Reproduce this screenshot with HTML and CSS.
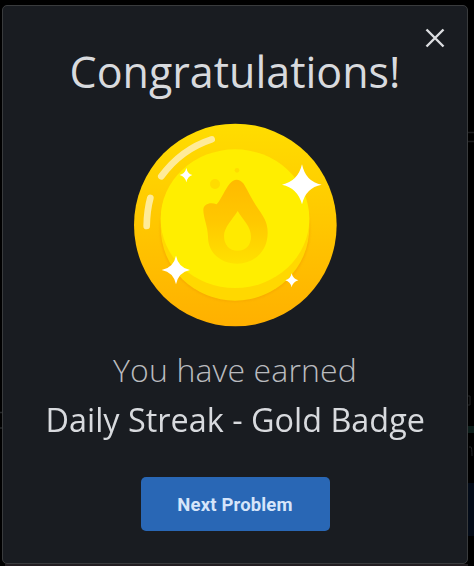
FILE: index.html
```
<!DOCTYPE html>
<html lang="en">
<head>
<title>Congratulations!</title>

<meta charset="utf-8">
<meta name="viewport" content="width=device-width, initial-scale=1">

<link rel="stylesheet" href="styles.css">
</head>

<body>
  <!-- dimmed page edges behind the modal -->
  <svg class="backdrop" viewBox="0 0 474 566" aria-hidden="true">
    <path d="M467 132.500h7M467 141.500h7" stroke="#1c1d1f" stroke-width="1.500"/>
    <path d="M0 412.500h3M0 428h3" stroke="#26282a" stroke-width="1.500"/>
    <path d="M468 396h2v9h-2M469 447h2q1 1 1 9" stroke="#232527" fill="none"/>
    <path d="M468 426h6v7h-6z" fill="#0b1d19"/>
    <path d="M468 483h6v53h-6z" fill="#030b18"/>
    <path d="M5 565h463" stroke="#231e22" stroke-width="2"/>
  </svg>

  <div class="modal" role="dialog" aria-modal="true">
    <button class="close" aria-label="Close">
      <svg viewBox="0 0 20 20"><path d="M1.500 1.500l17 17M18.500 1.500l-17 17"/></svg>
    </button>

    <h1 class="title">Congratulations!</h1>

    <svg class="badge" viewBox="0 0 666 666" role="img" aria-label="Gold badge">
      <defs>
        <linearGradient id="rim" x1="0" y1="0" x2="0" y2="1">
          <stop offset="0" stop-color="#ffdd00"/>
          <stop offset="1" stop-color="#ffb000"/>
        </linearGradient>
        <linearGradient id="flame" x1="0" y1="0" x2="0" y2="1">
          <stop offset="0" stop-color="#ffba00"/>
          <stop offset=".5" stop-color="#ffc800"/>
          <stop offset="1" stop-color="#ffe100"/>
        </linearGradient>
        <filter id="soft"><feGaussianBlur stdDeviation="3"/></filter>
      </defs>
      <circle cx="334" cy="333" r="304" fill="url(#rim)"/>
      <ellipse cx="333" cy="346" rx="225" ry="218" fill="#f5a400" opacity=".6" filter="url(#soft)"/>
      <path d="M110 315a223 208 0 0 1 446 0v25a223 220 0 0 1-446 0z" fill="#ffd800"/>
      <ellipse cx="333" cy="314" rx="223" ry="208" fill="#ffee00"/>

      <path d="M317 209Q338 185 359 209C372 231 385 258 399 279C417 306 431 323 431 356C431 414 388 449 340 449C291 449 252 417 252 368C252 340 238 310 238 288C238 270 259 263 278 271C294 252 303 226 317 209Z" fill="url(#flame)"/>
      <path d="M341 291C355 316 381 336 381 368C381 394 365 410 341 410C316 410 300 393 300 366C300 340 325 317 341 291Z" fill="#ffea00"/>
      <circle cx="273" cy="210" r="15" fill="#ffdc00"/>
      <circle cx="339" cy="169" r="7" fill="#ffdc00"/>

      <path d="M112 187Q171 106 263 76M79 252Q69 288 68 336" fill="none" stroke="#ffeb99" stroke-width="20" stroke-linecap="round"/>

      <g fill="#fff">
        <path d="M534 151Q545 204 593 212Q545 221 534 271Q521 222 474 212Q522 202 534 151Z"/>
        <path d="M156 425Q163 461 198 468Q163 475 156 511Q149 475 113 468Q149 461 156 425Z"/>
        <path d="M187 162Q191 180 205 183Q191 187 187 205Q183 187 167 183Q183 179 187 162Z"/>
        <path d="M503 478Q507 495 523 499Q507 503 503 520Q499 503 484 499Q499 495 503 478Z"/>
      </g>
    </svg>

    <p class="earned">You have earned</p>
    <p class="name">Daily Streak - Gold Badge</p>

    <button class="next">Next Problem</button>
  </div>
</body>

</html>
```

FILE: styles.css
```
* {
  box-sizing: border-box;
}
body {
  margin: 0;
  padding: 5px 6px 1px 2px;
  width: 474px;
  height: 566px;
  overflow: hidden;
  background-color: #000;
  font-family: "Open Sans", "Noto Sans", sans-serif;
}
.backdrop {
  position: absolute;
  top: 0;
  left: 0;
  width: 474px;
  height: 566px;
}
.modal {
  position: relative;
  display: flex;
  flex-direction: column;
  align-items: center;
  width: 466px;
  height: 559px;
  padding-top: 36px;
  background-color: #191c21;
  border: 1px solid #393b3d;
  border-radius: 5px;
}
.close {
  position: absolute;
  top: 22px;
  right: 22px;
  width: 20px;
  height: 20px;
  padding: 0;
  background: transparent;
  border: 0;
  cursor: pointer;
}
.close svg {
  display: block;
  fill: none;
  stroke: #dcdde0;
  stroke-width: 2.4;
}
.title,
.earned,
.name {
  margin: 0;
  white-space: nowrap;
}
.title {
  font-size: 43px;
  font-weight: 400;
  line-height: 60px;
  color: #d8dade;
}
.badge {
  flex: none;
  width: 222px;
  height: 222px;
  margin-top: 12px;
}
.earned {
  margin-top: 13px;
  font-size: 32px;
  font-weight: 300;
  line-height: 42px;
  letter-spacing: .15px;
  color: #b9bbbf;
}
.name {
  margin-top: 4px;
  font-size: 33.5px;
  line-height: 48px;
  color: #d8dade;
  transform: scaleX(.967);
}
.next {
  width: 189px;
  height: 54px;
  margin-top: 34px;
  padding: 2px 0 0;
  font: 700 18.5px Roboto, sans-serif;
  letter-spacing: .15px;
  color: #d6e5fa;
  background-color: #2967b5;
  border: 0;
  border-radius: 5px;
  cursor: pointer;
}
```
